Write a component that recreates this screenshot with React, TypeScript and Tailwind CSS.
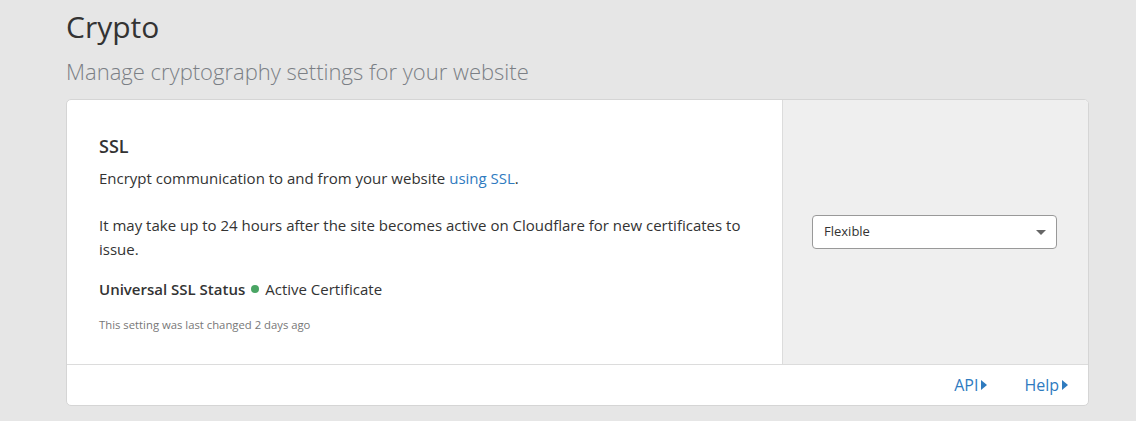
const font = { fontFamily: "'Segoe UI', 'Open Sans', 'Noto Sans', sans-serif" };

function Caret({ className }: { className?: string }) {
  return (
    <svg viewBox="0 0 6 10" className={className} fill="currentColor">
      <path d="M0 0 L6 5 L0 10 Z" />
    </svg>
  );
}

export default function App() {
  return (
    <div className="min-h-[421px] bg-[#e6e6e6] px-[66px] pt-[7px] pb-4" style={font}>
      <h1 className="text-[30px] leading-[40px] text-[#333] font-normal">Crypto</h1>
      <p className="text-[22px] leading-[30px] text-[#7b7f85] font-light mt-[9px] mb-[13px]">
        Manage cryptography settings for your website
      </p>

      <div className="w-[1023px] bg-white border border-[#d5d5d5] rounded-[5px] overflow-hidden">
        <div className="flex h-[264px]">
          <div className="flex-1 pl-[32px] pr-8 pt-[34px]">
            <h2 className="text-[18px] leading-6 font-semibold text-[#333]">SSL</h2>
            <p className="text-[15px] leading-6 text-[#333] mt-[8px]">
              Encrypt communication to and from your website{" "}
              <a className="text-[#2f7bbf]">using SSL</a>.
            </p>
            <p className="text-[15px] leading-6 text-[#333] mt-[23px] max-w-[660px]">
              It may take up to 24 hours after the site becomes active on Cloudflare for new certificates to issue.
            </p>
            <div className="mt-[16px] flex items-center text-[15px] leading-6 text-[#333]">
              <span className="font-semibold">Universal SSL Status</span>
              <span className="mx-[6px] inline-block w-2 h-2 rounded-full bg-[#4aa564]" />
              <span>Active Certificate</span>
            </div>
            <p className="text-[11.3px] leading-4 text-[#777] mt-[16px]">
              This setting was last changed 2 days ago
            </p>
          </div>
          <div className="w-[306px] bg-[#efefef] border-l border-[#dcdcdc] flex items-center pl-[29px]">
            <div className="w-[245px] h-[34px] bg-white border border-[#999] rounded-[4px] flex items-center justify-between pl-[11px] pr-[10px]">
              <span className="text-[13px] text-[#333]">Flexible</span>
              <svg viewBox="0 0 10 5" className="w-[10px] h-[5px] text-[#666]" fill="currentColor">
                <path d="M0 0 L10 0 L5 5 Z" />
              </svg>
            </div>
          </div>
        </div>
        <div className="h-[41px] border-t border-[#dcdcdc] flex items-center justify-end pr-[20px] gap-[37px] text-[16px] text-[#2f7bbf]">
          <span className="flex items-center gap-[3px]">
            API <Caret className="w-[6px] h-[10px]" />
          </span>
          <span className="flex items-center gap-[3px]">
            Help <Caret className="w-[6px] h-[10px]" />
          </span>
        </div>
      </div>
    </div>
  );
}
